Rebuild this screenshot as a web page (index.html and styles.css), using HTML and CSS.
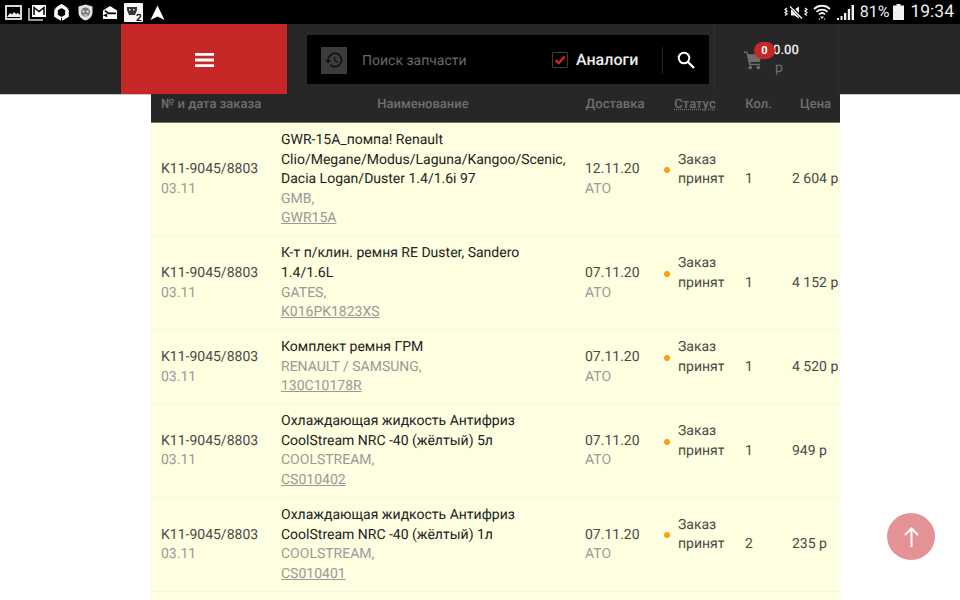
FILE: index.html
```html
<!DOCTYPE html>
<html lang="ru">
<head>
<meta charset="utf-8">
<title>Заказы</title>
<link rel="stylesheet" href="styles.css">
</head>
<body>
<div class="statusbar">
  <div class="notif">
    <svg class="ic ic-photo" viewBox="0 0 17 15"><rect x="1" y="1" width="15" height="13" fill="none" stroke="#f0f0f0" stroke-width="1.800"/><path d="M2 12l3-4 2 1.500 2-2.500 2 2 2-1 2 2v2H2z" fill="#f0f0f0"/></svg>
    <svg class="ic ic-mail" viewBox="0 0 19 17"><path d="M1 4v12h14" fill="none" stroke="#ccc" stroke-width="1.600"/><rect x="4" y="1" width="14" height="12" fill="#fff"/><path d="M6 11V3.500l5 4 5-4V11" fill="none" stroke="#000" stroke-width="1.500"/></svg>
    <svg class="ic ic-hex" viewBox="0 0 17 17"><path d="M8.500 2l5.500 3.200v6.600L8.500 15 3 11.800V5.200z" fill="none" stroke="#fff" stroke-width="3.600"/><path d="M5 0.500L1 6M12 0.500L16 6M8.500 17v-3" fill="none" stroke="#000" stroke-width="1"/></svg>
    <svg class="ic ic-shield" viewBox="0 0 17 17"><path d="M8.500 0.500l7 2v6c0 4-3.500 7-7 8-3.500-1-7-4-7-8v-6z" fill="#e4e4e4"/><circle cx="8.500" cy="8" r="4.500" fill="#777"/><path d="M5.500 6.500h2v2h-2zM9.500 6.500h2v2h-2zM6.500 10.500h4v1h-4z" fill="#eee"/></svg>
    <svg class="ic ic-env" viewBox="0 0 17 15"><path d="M1 5.500L8.500 0.500 16 5.500V14.500H1z" fill="#fff"/><path d="M3 5.500l4 3h8" fill="none" stroke="#000" stroke-width="1.800"/><path d="M1 10.500l4.500-2v4z" fill="#000"/></svg>
    <svg class="ic ic-app" viewBox="0 0 19 19"><rect width="19" height="19" rx="1" fill="#f6f6f6"/><path d="M3 4h10v3l-2 5H5L3 7z" fill="#333"/><path d="M5 6h1.500v1.500H5zM9 6h1.500v1.500H9z" fill="#eee"/><text class="app-digit" x="12" y="17.500">2</text></svg>
    <svg class="ic ic-nav" viewBox="0 0 15 15"><path d="M7.500 0.500L14.500 15 7.500 11.500 0.500 15z" fill="#fff"/></svg>
  </div>
  <div class="sys">
    <svg class="ic ic-vib" viewBox="0 0 24 15"><path d="M7 4.500h3.500L15 1.500v12l-4.500-3H7z" fill="#f2f2f2"/><path d="M6 1l13 13" stroke="#000" stroke-width="3"/><path d="M6 1.500l12 12" stroke="#f2f2f2" stroke-width="1.400"/><path d="M3 3l-2 1.500 2 1.500-2 1.500 2 1.500-2 1.500M21 3l2 1.500-2 1.500 2 1.500-2 1.500 2 1.500" fill="none" stroke="#f2f2f2" stroke-width="1.300"/></svg>
    <svg class="ic ic-wifi" viewBox="0 0 18 18"><path d="M1 6a11.500 11.500 0 0 1 16 0M3.500 8.800a8 8 0 0 1 11 0M6 11.400a4.500 4.500 0 0 1 6 0" fill="none" stroke="#f2f2f2" stroke-width="1.800"/><path d="M7 13.500h4L9 16z" fill="#f2f2f2"/><path d="M6.500 17v-2M11.500 17v-2" stroke="#888" stroke-width="1.200"/></svg>
    <svg class="ic ic-signal" viewBox="0 0 17 15"><path d="M0 13h2v2H0zM3.500 11h2v4h-2zM7 8h2.300v7H7zM10.800 4h2.300v11h-2.300zM14.600 0H17v15h-2.400z" fill="#f2f2f2"/></svg>
    <span class="pct">81%</span>
    <svg class="ic ic-batt" viewBox="0 0 11 16"><path d="M3.500 0h4v1.500h3.500V16H0V1.500h3.500z" fill="#f2f2f2"/></svg>
    <span class="clock">19:34</span>
  </div>
</div>

<header class="topbar">
  <button class="menu" aria-label="Меню">
    <svg class="burger" viewBox="0 0 19 14"><path d="M0 0h19v2.800H0zM0 5.600h19v2.800H0zM0 11.200h19V14H0z" fill="#fff"/></svg>
  </button>
  <div class="search">
    <div class="history">
      <svg viewBox="0 0 24 24" class="history-ic"><path d="M13 3a9 9 0 0 0-9 9H1l3.900 3.900L8.900 12H6a7 7 0 1 1 2.100 5l-1.400 1.400A9 9 0 1 0 13 3zm-1 5v5l4.300 2.500.7-1.200-3.500-2.100V8z" fill="#111"/></svg>
    </div>
    <span class="placeholder">Поиск запчасти</span>
    <span class="checkbox">
      <svg viewBox="0 0 16 16" class="check"><path d="M3 8l3.500 3.500L13.500 4" fill="none" stroke="#d9232a" stroke-width="2.600"/></svg>
    </span>
    <span class="analog">Аналоги</span>
    <span class="divider"></span>
    <svg viewBox="0 0 18 18" class="loupe"><circle cx="7" cy="7" r="5.300" fill="none" stroke="#fff" stroke-width="2"/><path d="M11 11l6 6" stroke="#fff" stroke-width="2.400"/></svg>
  </div>
  <div class="cart">
    <svg viewBox="0 0 20 20" class="cart-ic"><path d="M0 1h3.500l1 3H19l-2.500 8H6.500l.6 2H17v1.600H5.500L2.500 2.700H0z" fill="#6e6e6e"/><circle cx="6.500" cy="18" r="1.900" fill="#6e6e6e"/><circle cx="15" cy="18" r="1.900" fill="#6e6e6e"/></svg>
    <div class="cart-sum">
      <span class="cart-val">0.00</span>
      <span class="cart-cur">р</span>
    </div>
    <span class="badge">0</span>
  </div>
</header>

<main class="orders">
  <div class="row head">
    <div class="cell">№ и дата заказа</div>
    <div class="cell c">Наименование</div>
    <div class="cell c">Доставка</div>
    <div class="cell c"><span class="dotted">Статус</span></div>
    <div class="cell c">Кол.</div>
    <div class="cell price-h">Цена</div>
  </div>

  <div class="row">
    <div class="cell"><div>K11-9045/8803</div><div class="muted">03.11</div></div>
    <div class="cell"><div class="name">GWR-15A_помпа! Renault Clio/Megane/Modus/Laguna/Kangoo/Scenic, Dacia Logan/Duster 1.4/1.6i 97</div><div class="muted">GMB,</div><a class="muted link">GWR15A</a></div>
    <div class="cell"><div>12.11.20</div><div class="muted">АТО</div></div>
    <div class="cell status"><span class="dot"></span><span class="st-text">Заказ принят</span></div>
    <div class="cell">1</div>
    <div class="cell">2 604 р</div>
  </div>

  <div class="row">
    <div class="cell"><div>K11-9045/8803</div><div class="muted">03.11</div></div>
    <div class="cell"><div class="name">К-т п/клин. ремня RE Duster, Sandero 1.4/1.6L</div><div class="muted">GATES,</div><a class="muted link">K016PK1823XS</a></div>
    <div class="cell"><div>07.11.20</div><div class="muted">АТО</div></div>
    <div class="cell status"><span class="dot"></span><span class="st-text">Заказ принят</span></div>
    <div class="cell">1</div>
    <div class="cell">4 152 р</div>
  </div>

  <div class="row">
    <div class="cell"><div>K11-9045/8803</div><div class="muted">03.11</div></div>
    <div class="cell"><div class="name">Комплект ремня ГРМ</div><div class="muted">RENAULT / SAMSUNG,</div><a class="muted link">130C10178R</a></div>
    <div class="cell"><div>07.11.20</div><div class="muted">АТО</div></div>
    <div class="cell status"><span class="dot"></span><span class="st-text">Заказ принят</span></div>
    <div class="cell">1</div>
    <div class="cell">4 520 р</div>
  </div>

  <div class="row">
    <div class="cell"><div>K11-9045/8803</div><div class="muted">03.11</div></div>
    <div class="cell"><div class="name">Охлаждающая жидкость Антифриз CoolStream NRC -40 (жёлтый) 5л</div><div class="muted">COOLSTREAM,</div><a class="muted link">CS010402</a></div>
    <div class="cell"><div>07.11.20</div><div class="muted">АТО</div></div>
    <div class="cell status"><span class="dot"></span><span class="st-text">Заказ принят</span></div>
    <div class="cell">1</div>
    <div class="cell">949 р</div>
  </div>

  <div class="row">
    <div class="cell"><div>K11-9045/8803</div><div class="muted">03.11</div></div>
    <div class="cell"><div class="name">Охлаждающая жидкость Антифриз CoolStream NRC -40 (жёлтый) 1л</div><div class="muted">COOLSTREAM,</div><a class="muted link">CS010401</a></div>
    <div class="cell"><div>07.11.20</div><div class="muted">АТО</div></div>
    <div class="cell status"><span class="dot"></span><span class="st-text">Заказ принят</span></div>
    <div class="cell">2</div>
    <div class="cell">235 р</div>
  </div>

  <div class="tail"></div>
</main>

<button class="totop" aria-label="Наверх">
  <svg viewBox="0 0 15 20" class="totop-ic"><path d="M7.500 20V1.500M1 8l6.500-6.500L14 8" fill="none" stroke="#fff" stroke-width="2"/></svg>
</button>
</body>
</html>
```
FILE: styles.css
```css
* { box-sizing: border-box; }
html, body { height: 100%; }
body {
  margin: 0;
  height: 600px;
  overflow: hidden;
  background: #fff;
  font-family: Roboto, "Liberation Sans", sans-serif;
  font-size: 14px;
  line-height: 19.6px;
  color: #4a4a4a;
  text-rendering: geometricPrecision;
}
.ic { display: block; flex: none; }

.statusbar {
  height: 24px;
  background: #000;
  display: flex;
  align-items: center;
  justify-content: space-between;
  padding: 0 6px 0 5px;
}
.notif, .sys { display: flex; align-items: center; }
.ic-photo { width: 17px; height: 15px; margin-right: 6px; }
.ic-mail { width: 19px; height: 17px; margin-right: 6px; }
.ic-hex { width: 17px; height: 17px; margin-right: 7px; }
.ic-shield { width: 17px; height: 17px; margin-right: 8px; }
.ic-env { width: 16px; height: 15px; margin-right: 6px; }
.ic-app { width: 19px; height: 19px; margin-right: 7px; }
.ic-nav { width: 15px; height: 15px; }
.app-digit { font: 700 10px Roboto, sans-serif; fill: #111; }
.ic-vib { width: 24px; height: 15px; margin-right: 5px; }
.ic-wifi { width: 18px; height: 18px; margin-right: 6px; }
.ic-signal { width: 17px; height: 15px; margin-right: 6px; }
.pct { color: #eee; font-size: 16px; line-height: 24px; margin-right: 4px; }
.ic-batt { width: 11px; height: 16px; margin-right: 6px; }
.clock { color: #eee; font-size: 17.500px; line-height: 24px; }

.topbar {
  height: 70px;
  background: #272727;
  display: flex;
  padding-left: 121px;
  align-items: stretch;
  box-shadow: 0 1px 0 #c8c8c8;
}
.menu {
  width: 166px;
  border: 0;
  padding: 2px 0 0;
  background: #c62828;
  display: flex;
  align-items: center;
  justify-content: center;
}
.burger { width: 19px; height: 14px; display: block; }
.search {
  width: 402px;
  height: 49px;
  margin: 11px 0 0 20px;
  padding: 1px 0 0 14px;
  background: #000;
  display: flex;
  align-items: center;
}
.history {
  width: 26px;
  height: 27px;
  background: #3c3c3c;
  display: flex;
  align-items: center;
  justify-content: center;
  margin-right: 15px;
}
.history-ic { width: 20px; height: 20px; display: block; }
.placeholder { color: #6a6a6a; font-size: 14px; width: 190px; padding-top: 3px; }
.checkbox {
  width: 16px;
  height: 16px;
  border: 1px solid #3d3d3d;
  border-radius: 1px;
  display: flex;
  align-items: center;
  justify-content: center;
  margin-right: 8px;
}
.check { width: 14px; height: 14px; display: block; }
.analog { color: #ededed; font-size: 16px; font-weight: 500; width: 86px; }
.divider { width: 1px; height: 27px; background: #242424; margin-right: 14px; }
.loupe { width: 18px; height: 18px; display: block; }

.cart {
  position: relative;
  width: 125px;
  margin-left: 5px;
  border-left: 1px solid #2e2e2e;
  border-right: 1px solid #2e2e2e;
  display: flex;
  padding: 18px 0 0 29px;
}
.cart-ic { width: 19px; height: 20px; display: block; margin-top: 8px; flex: none; }
.cart-sum { display: flex; flex-direction: column; margin-left: 10px; }
.cart-val { color: #f0f0f0; font-size: 13px; font-weight: 500; line-height: 17px; }
.cart-cur { color: #6e6e6e; font-size: 14px; line-height: 19px; margin-left: 2px; }
.badge {
  position: absolute;
  left: 39px;
  top: 18px;
  width: 21px;
  height: 17px;
  border-radius: 9px;
  background: #c62828;
  color: #fff;
  font-size: 11px;
  font-weight: 700;
  line-height: 17px;
  text-align: center;
}

.orders { width: 689px; margin-left: 151px; }
.row {
  display: grid;
  grid-template-columns: 120px 304px 80px 80px 47px 58px;
  align-items: center;
  padding: 8px 0 6.400px;
  background: #fefee0;
  border-bottom: 1px solid #f7f7e6;
}
.cell { padding-left: 10px; min-width: 0; }
.head {
  height: 29px;
  padding: 0 0 6px;
  background: #272727;
  color: #6f6f6f;
  font-size: 13px;
  font-weight: 500;
  border-bottom: 1px solid #77775f;
}
.head .c { padding-left: 0; text-align: center; }
.head .price-h { padding-left: 18px; }
.dotted { text-decoration: underline dotted; text-underline-offset: 1px; }
.name { color: #222; padding-right: 2px; }
.muted { color: #9a9a9a; }
.link { display: block; width: max-content; text-decoration: underline; }
.status { display: flex; align-items: center; padding-left: 9px; padding-bottom: 19.600px; }
.dot { width: 6px; height: 6px; border-radius: 50%; background: #ffa000; flex: none; margin-right: 8px; }
.st-text { width: 50px; }
.tail { height: 10px; background: #fefee0; }

.totop {
  position: fixed;
  left: 887px;
  top: 513px;
  width: 48px;
  height: 47px;
  border-radius: 50%;
  border: 0;
  padding: 0;
  background: #e39395;
  display: flex;
  align-items: center;
  justify-content: center;
}
.totop-ic { width: 15px; height: 20px; display: block; }
```
